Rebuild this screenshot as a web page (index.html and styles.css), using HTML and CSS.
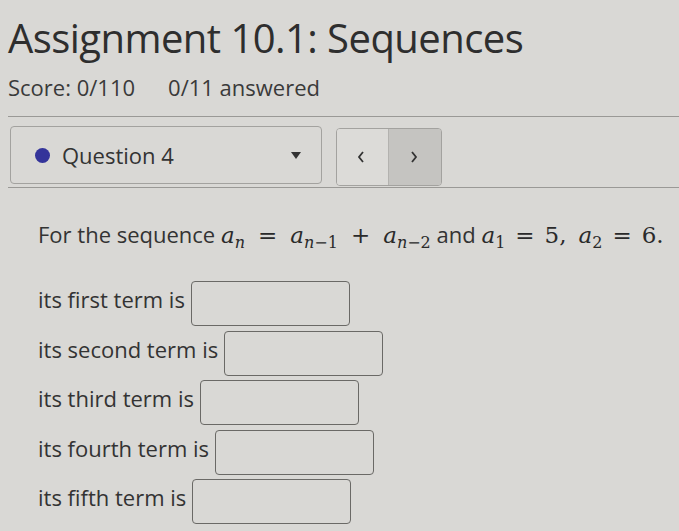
FILE: index.html
```html
<!DOCTYPE html>
<html>
<head>
<meta charset="utf-8">
<link rel="stylesheet" href="styles.css">
</head>
<body>
<div class="page">
  <h1 class="title">Assignment 10.1: Sequences</h1>
  <div class="meta"><span class="score">Score: 0/110</span><span class="answered">0/11 answered</span></div>
  <div class="qbar">
    <div class="select">
      <span class="dot"></span>
      <span class="qlabel">Question 4</span>
      <span class="caret"></span>
    </div>
    <div class="nav">
      <div class="nav-btn prev">
        <svg width="10" height="14" viewBox="0 0 10 14"><path d="M7 2 L3 7 L7 12" fill="none" stroke="#333" stroke-width="1.8"/></svg>
      </div>
      <div class="nav-btn next">
        <svg width="10" height="14" viewBox="0 0 10 14"><path d="M3 2 L7 7 L3 12" fill="none" stroke="#333" stroke-width="1.8"/></svg>
      </div>
    </div>
  </div>
  <div class="question">
    <p class="stem">For the sequence <span class="math"><i>a</i><sub><i>n</i></sub><span class="op">=</span><i>a</i><sub><i>n</i>−1</sub><span class="op">+</span><i>a</i><sub><i>n</i>−2</sub></span> and <span class="math"><i>a</i><sub>1</sub><span class="op op2">=</span>5,<span class="sp"></span><i>a</i><sub>2</sub><span class="op op2">=</span>6.</span></p>
    <div class="row"><span class="label">its first term is</span><span class="box"></span></div>
    <div class="row"><span class="label">its second term is</span><span class="box"></span></div>
    <div class="row"><span class="label">its third term is</span><span class="box"></span></div>
    <div class="row"><span class="label">its fourth term is</span><span class="box"></span></div>
    <div class="row"><span class="label">its fifth term is</span><span class="box"></span></div>
  </div>
</div>
</body>
</html>
```
FILE: styles.css
```css
html, body {
  margin: 0;
  padding: 0;
  background: #d9d8d5;
}
body {
  font-family: "Open Sans", "Liberation Sans", sans-serif;
  color: #333;
}
.page {
  padding: 9px 0 0 8px;
}
.title {
  margin: 0;
  font-size: 40px;
  font-weight: 400;
  line-height: 58px;
  color: #2e2e2e;
  letter-spacing: -0.55px;
}
.meta {
  margin-top: 5px;
  font-size: 22px;
  line-height: 30px;
  color: #3a3a3a;
  display: flex;
  gap: 33px;
}
.qbar {
  margin-top: 14px;
  border-top: 1.5px solid #9a9996;
  border-bottom: 1.5px solid #9a9996;
  padding: 9px 0 1px 2px;
  display: flex;
  gap: 14px;
}
.select {
  width: 310px;
  height: 56px;
  border: 1px solid #a3a29f;
  border-radius: 4px;
  display: flex;
  align-items: center;
}
.dot {
  width: 15px;
  height: 15px;
  border-radius: 50%;
  background: #34349a;
  margin-left: 24px;
}
.qlabel {
  margin-left: 12px;
  font-size: 22px;
  color: #333;
  flex: 1;
}
.caret {
  width: 0;
  height: 0;
  border-left: 5px solid transparent;
  border-right: 5px solid transparent;
  border-top: 7px solid #333;
  margin-right: 20px;
}
.nav {
  display: flex;
  height: 56px;
  border: 1px solid #a3a29f;
  border-radius: 4px;
  overflow: hidden;
  margin-top: 2px;
}
.nav-btn {
  box-sizing: border-box;
  width: 52px;
  padding-right: 3px;
  display: flex;
  align-items: center;
  justify-content: center;
}
.prev {
  background: #dcdbd8;
  border-right: 1px solid #b3b2af;
}
.next {
  background: #c5c4c1;
}
.question {
  padding-left: 30px;
}
.stem {
  margin: 31px 0 31px;
  font-size: 22px;
  line-height: 30px;
  color: #333;
}
.math {
  font-family: "DejaVu Serif", "Liberation Serif", serif;
  font-size: 23px;
  color: #2a2a2a;
}
.math i {
  font-style: italic;
}
.math sub {
  font-size: 16px;
  vertical-align: -5px;
  line-height: 0;
}
.op {
  margin: 0 13px;
}
.op2 {
  margin: 0 10px;
}
.sp {
  display: inline-block;
  width: 12px;
}
.row {
  display: flex;
  align-items: center;
  height: 45px;
  margin-bottom: 4.5px;
}
.label {
  font-size: 22px;
  color: #333;
  margin-bottom: 9px;
}
.box {
  width: 157px;
  height: 43px;
  border: 1.5px solid #6a6966;
  border-radius: 4px;
  margin-left: 6px;
}
```
